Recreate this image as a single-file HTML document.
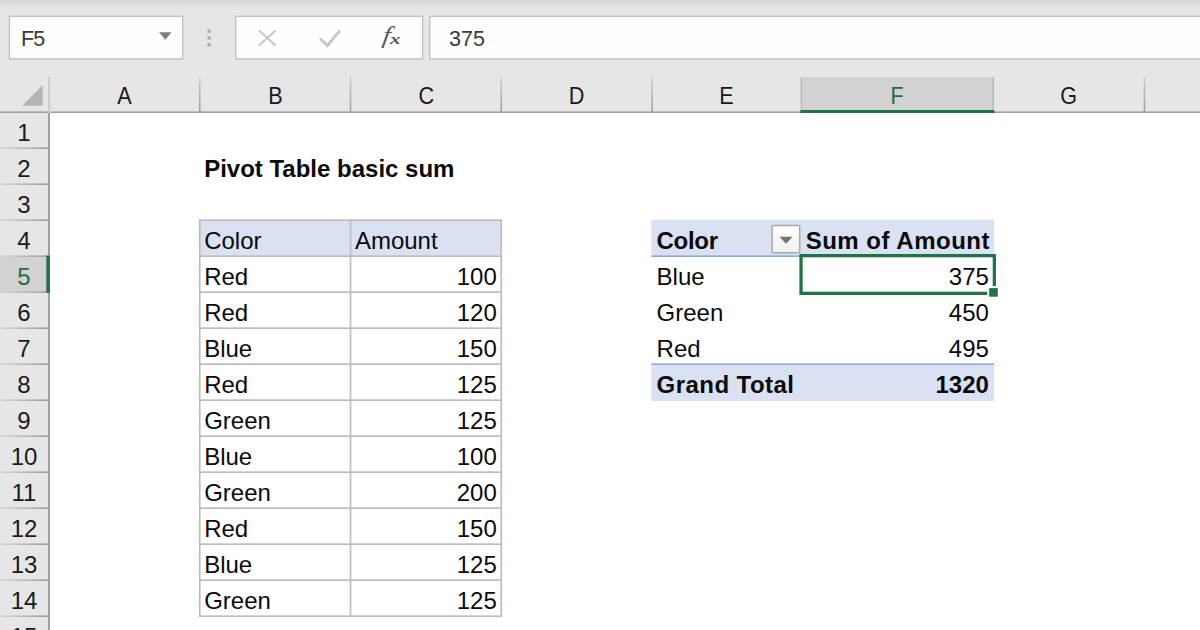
<!DOCTYPE html><html><head><meta charset="utf-8"><title>Pivot Table basic sum</title><style>
*{box-sizing:border-box;margin:0;padding:0}
html,body{width:1200px;height:630px;overflow:hidden;background:#e6e6e6}
body{position:relative;font-family:"Liberation Sans",sans-serif;color:#000}
.abs{position:absolute}
#g{position:absolute;left:0;top:0}
.ui{font-family:"Liberation Sans",sans-serif;font-size:21.5px;color:#3a3a3a;position:absolute;white-space:nowrap;line-height:1}
.ch{position:absolute;top:77px;height:35px;font-size:24px;line-height:1;text-align:center;color:#1a1a1a}
.ch span{position:absolute;left:0;right:0;top:7px;transform:scaleX(.9)}
.rh{position:absolute;left:0;width:48px;height:36px;font-size:24px;line-height:1;text-align:center;color:#1a1a1a}
.rh span{position:absolute;left:0;right:0;top:9px}
.c{position:absolute;height:36px;font-size:24px;line-height:1;white-space:nowrap;color:#0a0a0a}
.c span{position:absolute;top:9px}
.c .l{left:4.4px}
.c .r{right:4.5px}
.b{font-weight:bold}
.fx{font-family:"Liberation Serif",serif;font-style:italic;color:#595959;white-space:nowrap;line-height:1;transform-origin:0 0}
</style></head><body>
<svg id="g" width="1200" height="630" viewBox="0 0 1200 630"><defs><linearGradient id="tg" x1="0" y1="0" x2="0" y2="1"><stop offset="0" stop-color="#d5d5d5"/><stop offset="1" stop-color="#e5e5e5"/></linearGradient><linearGradient id="hl" x1="0" y1="0" x2="1" y2="0"><stop offset="0" stop-color="#d6d6d6"/><stop offset="1" stop-color="#9e9e9e"/></linearGradient><linearGradient id="vl" x1="0" y1="0" x2="0" y2="1"><stop offset="0" stop-color="#cfcfcf"/><stop offset="1" stop-color="#9e9e9e"/></linearGradient><linearGradient id="fb" x1="0" y1="0" x2="0" y2="1"><stop offset="0" stop-color="#ffffff"/><stop offset="1" stop-color="#f0f0f0"/></linearGradient></defs>
<rect x="0" y="0" width="1200" height="7" fill="url(#tg)" />
<rect x="9.4" y="16.25" width="173.3" height="42.65" fill="#fefefe" stroke="#c1c1c1" stroke-width="1.4"/>
<rect x="235.7" y="16.25" width="186.9" height="42.65" fill="#fefefe" stroke="#c1c1c1" stroke-width="1.4"/>
<rect x="429.7" y="16.25" width="800" height="42.65" fill="#fefefe" stroke="#c1c1c1" stroke-width="1.4"/>
<path d="M159 32.3h12.5L165.25 39.7z" fill="#7e7e82"/>
<rect x="207.3" y="29.4" width="3.6" height="3.4" fill="#b0b0b0" />
<rect x="207.3" y="36.3" width="3.6" height="3.4" fill="#b0b0b0" />
<rect x="207.3" y="43.1" width="3.6" height="3.4" fill="#b0b0b0" />
<path d="M259 30.5L275.5 45.5M275.5 30.5L259 45.5" stroke="#c8c8c8" stroke-width="2.2" fill="none"/>
<path d="M320 38.5L327.3 45.5L340 30.5" stroke="#c8c8c8" stroke-width="3" fill="none"/>
<rect x="50" y="113" width="1160" height="530" fill="#fff" />
<rect x="801.3" y="77" width="192.1" height="36" fill="#d2d2d2" />
<rect x="800.6" y="77" width="1.4" height="36" fill="#b8b8b8" />
<rect x="992.6" y="77" width="1.4" height="36" fill="#b8b8b8" />
<rect x="0" y="256.2" width="48" height="36" fill="#d2d2d2" />
<rect x="0" y="111.4" width="1200" height="1.6" fill="#a3a3a3" />
<rect x="48" y="77" width="2" height="560" fill="url(#vl)" />
<rect x="48" y="113" width="2" height="530" fill="#9f9f9f" />
<path d="M42.7 85V105.7H22.2z" fill="#b3b5b4"/>
<rect x="198.95" y="77" width="1.6" height="35" fill="url(#vl)" />
<rect x="349.7" y="77" width="1.6" height="35" fill="url(#vl)" />
<rect x="500.45" y="77" width="1.6" height="35" fill="url(#vl)" />
<rect x="651.4" y="77" width="1.6" height="35" fill="url(#vl)" />
<rect x="1143.7" y="77" width="1.6" height="35" fill="url(#vl)" />
<rect x="0" y="147.4" width="48" height="1.6" fill="url(#hl)" />
<rect x="0" y="183.4" width="48" height="1.6" fill="url(#hl)" />
<rect x="0" y="219.4" width="48" height="1.6" fill="url(#hl)" />
<rect x="0" y="255.4" width="48" height="1.6" fill="url(#hl)" />
<rect x="0" y="291.4" width="48" height="1.6" fill="url(#hl)" />
<rect x="0" y="327.4" width="48" height="1.6" fill="url(#hl)" />
<rect x="0" y="363.4" width="48" height="1.6" fill="url(#hl)" />
<rect x="0" y="399.4" width="48" height="1.6" fill="url(#hl)" />
<rect x="0" y="435.4" width="48" height="1.6" fill="url(#hl)" />
<rect x="0" y="471.4" width="48" height="1.6" fill="url(#hl)" />
<rect x="0" y="507.4" width="48" height="1.6" fill="url(#hl)" />
<rect x="0" y="543.4" width="48" height="1.6" fill="url(#hl)" />
<rect x="0" y="579.4" width="48" height="1.6" fill="url(#hl)" />
<rect x="0" y="615.4" width="48" height="1.6" fill="url(#hl)" />
<rect x="0" y="651.4" width="48" height="1.6" fill="url(#hl)" />
<rect x="800.4" y="110" width="193.9" height="3" fill="#217346" />
<rect x="46.3" y="255.6" width="3.7" height="37.2" fill="#217346" />
<rect x="199.75" y="220.2" width="301.5" height="36" fill="#d9e1f2" />
<rect x="198.9" y="219.35" width="303.2" height="1.7" fill="#bdbdbd" />
<rect x="198.9" y="255.35" width="303.2" height="1.7" fill="#bdbdbd" />
<rect x="198.9" y="291.35" width="303.2" height="1.7" fill="#bdbdbd" />
<rect x="198.9" y="327.35" width="303.2" height="1.7" fill="#bdbdbd" />
<rect x="198.9" y="363.35" width="303.2" height="1.7" fill="#bdbdbd" />
<rect x="198.9" y="399.35" width="303.2" height="1.7" fill="#bdbdbd" />
<rect x="198.9" y="435.35" width="303.2" height="1.7" fill="#bdbdbd" />
<rect x="198.9" y="471.35" width="303.2" height="1.7" fill="#bdbdbd" />
<rect x="198.9" y="507.35" width="303.2" height="1.7" fill="#bdbdbd" />
<rect x="198.9" y="543.35" width="303.2" height="1.7" fill="#bdbdbd" />
<rect x="198.9" y="579.35" width="303.2" height="1.7" fill="#bdbdbd" />
<rect x="198.9" y="615.35" width="303.2" height="1.7" fill="#bdbdbd" />
<rect x="198.9" y="219.35" width="1.7" height="397.7" fill="#bdbdbd" />
<rect x="349.65" y="219.35" width="1.7" height="397.7" fill="#bdbdbd" />
<rect x="500.4" y="219.35" width="1.7" height="397.7" fill="#bdbdbd" />
<rect x="651.3" y="219.5" width="342.9" height="36.7" fill="#d9e1f2" />
<rect x="651.3" y="255.4" width="342.9" height="1.6" fill="#8eaadb" />
<rect x="651.3" y="364.2" width="342.9" height="36.8" fill="#d9e1f2" />
<rect x="651.3" y="363.4" width="342.9" height="1.6" fill="#8eaadb" />
<rect x="772.1" y="225.5" width="27.6" height="27.3" fill="url(#fb)" stroke="#a9a9a9" stroke-width="1.5" rx="1.5"/>
<path d="M779.5 236.8h13L786 243.8z" fill="#747477"/>
<rect x="801.05" y="255.65" width="193.3" height="37.7" fill="none" stroke="#217346" stroke-width="3.3"/>
<rect x="987.2" y="286.1" width="11.5" height="11.5" fill="#fff" />
<rect x="989.2" y="288.1" width="8.6" height="8.6" fill="#217346" /></svg>
<div class="ui" style="left:21px;top:29px;letter-spacing:-1px">F5</div>
<div class="abs fx" style="left:385px;top:22.5px;font-size:24px;transform:skewX(-9deg) scaleX(1.15)">f</div><div class="abs fx" style="left:389.5px;top:33px;font-size:14px;font-weight:bold;transform:scaleX(1.5)">x</div>
<div class="ui" style="left:449px;top:29px">375</div>
<div class="ch" style="left:49px;width:150.75px;"><span>A</span></div>
<div class="ch" style="left:199.75px;width:150.75px;"><span>B</span></div>
<div class="ch" style="left:350.5px;width:150.75px;"><span>C</span></div>
<div class="ch" style="left:501.25px;width:150.95px;"><span>D</span></div>
<div class="ch" style="left:652.2px;width:149.1px;"><span>E</span></div>
<div class="ch" style="left:801.3px;width:192.1px;color:#1f6b45;"><span>F</span></div>
<div class="ch" style="left:993.4px;width:151.1px;"><span>G</span></div>
<div class="rh" style="top:112px;"><span>1</span></div>
<div class="rh" style="top:148px;"><span>2</span></div>
<div class="rh" style="top:184px;"><span>3</span></div>
<div class="rh" style="top:220px;"><span>4</span></div>
<div class="rh" style="top:256px;color:#1f6b45;"><span>5</span></div>
<div class="rh" style="top:292px;"><span>6</span></div>
<div class="rh" style="top:328px;"><span>7</span></div>
<div class="rh" style="top:364px;"><span>8</span></div>
<div class="rh" style="top:400px;"><span>9</span></div>
<div class="rh" style="top:436px;"><span>10</span></div>
<div class="rh" style="top:472px;"><span>11</span></div>
<div class="rh" style="top:508px;"><span>12</span></div>
<div class="rh" style="top:544px;"><span>13</span></div>
<div class="rh" style="top:580px;"><span>14</span></div>
<div class="rh" style="top:616px;"><span>15</span></div>
<div class="c b" style="left:199.75px;top:148px;width:150.75px;"><span class="l">Pivot Table basic sum</span></div>
<div class="c" style="left:199.75px;top:220px;width:150.75px;"><span class="l">Color</span></div>
<div class="c" style="left:350.5px;top:220px;width:150.75px;"><span class="l">Amount</span></div>
<div class="c" style="left:199.75px;top:256px;width:150.75px;"><span class="l">Red</span></div>
<div class="c" style="left:350.5px;top:256px;width:150.75px;"><span class="r">100</span></div>
<div class="c" style="left:199.75px;top:292px;width:150.75px;"><span class="l">Red</span></div>
<div class="c" style="left:350.5px;top:292px;width:150.75px;"><span class="r">120</span></div>
<div class="c" style="left:199.75px;top:328px;width:150.75px;"><span class="l">Blue</span></div>
<div class="c" style="left:350.5px;top:328px;width:150.75px;"><span class="r">150</span></div>
<div class="c" style="left:199.75px;top:364px;width:150.75px;"><span class="l">Red</span></div>
<div class="c" style="left:350.5px;top:364px;width:150.75px;"><span class="r">125</span></div>
<div class="c" style="left:199.75px;top:400px;width:150.75px;"><span class="l">Green</span></div>
<div class="c" style="left:350.5px;top:400px;width:150.75px;"><span class="r">125</span></div>
<div class="c" style="left:199.75px;top:436px;width:150.75px;"><span class="l">Blue</span></div>
<div class="c" style="left:350.5px;top:436px;width:150.75px;"><span class="r">100</span></div>
<div class="c" style="left:199.75px;top:472px;width:150.75px;"><span class="l">Green</span></div>
<div class="c" style="left:350.5px;top:472px;width:150.75px;"><span class="r">200</span></div>
<div class="c" style="left:199.75px;top:508px;width:150.75px;"><span class="l">Red</span></div>
<div class="c" style="left:350.5px;top:508px;width:150.75px;"><span class="r">150</span></div>
<div class="c" style="left:199.75px;top:544px;width:150.75px;"><span class="l">Blue</span></div>
<div class="c" style="left:350.5px;top:544px;width:150.75px;"><span class="r">125</span></div>
<div class="c" style="left:199.75px;top:580px;width:150.75px;"><span class="l">Green</span></div>
<div class="c" style="left:350.5px;top:580px;width:150.75px;"><span class="r">125</span></div>
<div class="c b" style="left:652.2px;top:220px;width:149.1px;letter-spacing:-0.3px;"><span class="l">Color</span></div>
<div class="c b" style="left:801.3px;top:220px;width:192.1px;letter-spacing:0.5px;"><span class="l">Sum of Amount</span></div>
<div class="c" style="left:652.2px;top:256px;width:149.1px;"><span class="l">Blue</span></div>
<div class="c" style="left:801.3px;top:256px;width:192.1px;"><span class="r">375</span></div>
<div class="c" style="left:652.2px;top:292px;width:149.1px;"><span class="l">Green</span></div>
<div class="c" style="left:801.3px;top:292px;width:192.1px;"><span class="r">450</span></div>
<div class="c" style="left:652.2px;top:328px;width:149.1px;"><span class="l">Red</span></div>
<div class="c" style="left:801.3px;top:328px;width:192.1px;"><span class="r">495</span></div>
<div class="c b" style="left:652.2px;top:364px;width:149.1px;letter-spacing:0.45px;"><span class="l">Grand Total</span></div>
<div class="c b" style="left:801.3px;top:364px;width:192.1px;"><span class="r">1320</span></div>
</body></html>
